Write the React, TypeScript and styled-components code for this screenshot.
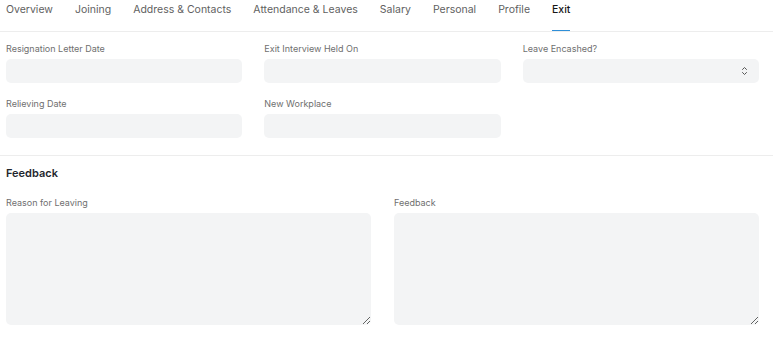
import React from 'react'
import styled, { createGlobalStyle } from 'styled-components'

const GlobalStyle = createGlobalStyle`
    html, body {
        margin: 0;
        padding: 0;
        background: #ffffff;
    }
    body {
        font-family: Inter, "Noto Sans", sans-serif;
        color: #171717;
    }
`

const Page = styled.div`
    width: 773px;
`

const TabBar = styled.nav`
    display: flex;
    gap: 22px;
    height: 31px;
    padding: 0 6px;
    border-bottom: 1px solid #ededed;
`

const Tab = styled.div<{ active?: boolean }>`
    position: relative;
    padding-top: 3px;
    font-size: 10.5px;
    line-height: 14px;
    color: ${p => p.active ? '#171717' : '#5f5f5f'};
    font-weight: ${p => p.active ? 500 : 400};

    &::after {
        content: '';
        display: ${p => p.active ? 'block' : 'none'};
        position: absolute;
        left: 0;
        right: 0;
        bottom: 0;
        height: 1px;
        background: #2f8fd8;
    }
`

const Section = styled.section<{ divider?: boolean }>`
    padding: 10px 14px 17px 6px;
    border-bottom: ${p => p.divider ? '1px solid #ededed' : 'none'};
`

const SectionTitle = styled.h3`
    margin: 0 0 16px;
    font-size: 11px;
    line-height: 14px;
    font-weight: 600;
    color: #1f272e;
`

const Grid = styled.div<{ cols: number }>`
    display: grid;
    grid-template-columns: repeat(${p => p.cols}, 1fr);
    column-gap: ${p => p.cols === 2 ? 23 : 22}px;
    row-gap: 14px;
`

const Column = styled.div`
    display: flex;
    flex-direction: column;
    gap: 14px;
`

const Field = styled.div`
    display: flex;
    flex-direction: column;
    gap: 4px;
`

const Label = styled.label`
    font-size: 9px;
    line-height: 13px;
    color: #6f6f6f;
`

const Input = styled.div`
    height: 24px;
    border-radius: 5px;
    background: #f3f4f5;
`

const SelectBox = styled.div`
    display: flex;
    align-items: center;
    justify-content: flex-end;
    padding-right: 11px;
    height: 24px;
    border-radius: 5px;
    background: #f3f4f5;
`

const TextArea = styled.textarea`
    box-sizing: border-box;
    height: 112px;
    border: none;
    border-radius: 5px;
    background: #f3f4f5;
    resize: vertical;
    outline: none;
    font-family: inherit;
`

const tabs = ['Overview', 'Joining', 'Address & Contacts', 'Attendance & Leaves', 'Salary', 'Personal', 'Profile', 'Exit']

const UpDown = () =>
    <svg width="7" height="10" viewBox="0 0 7 10" fill="none" stroke="#555" strokeWidth="1" strokeLinecap="round" strokeLinejoin="round">
        <path d="M1.5 3.5 L3.5 1.5 L5.5 3.5" />
        <path d="M1.5 6.5 L3.5 8.5 L5.5 6.5" />
    </svg>

const App: React.FC = () =>
    <Page>
        <GlobalStyle />
        <TabBar>
            {tabs.map(t => <Tab key={t} active={t === 'Exit'}>{t}</Tab>)}
        </TabBar>
        <Section divider>
            <Grid cols={3}>
                <Column>
                    <Field>
                        <Label>Resignation Letter Date</Label>
                        <Input />
                    </Field>
                    <Field>
                        <Label>Relieving Date</Label>
                        <Input />
                    </Field>
                </Column>
                <Column>
                    <Field>
                        <Label>Exit Interview Held On</Label>
                        <Input />
                    </Field>
                    <Field>
                        <Label>New Workplace</Label>
                        <Input />
                    </Field>
                </Column>
                <Column>
                    <Field>
                        <Label>Leave Encashed?</Label>
                        <SelectBox><UpDown /></SelectBox>
                    </Field>
                </Column>
            </Grid>
        </Section>
        <Section>
            <SectionTitle>Feedback</SectionTitle>
            <Grid cols={2}>
                <Field>
                    <Label>Reason for Leaving</Label>
                    <TextArea />
                </Field>
                <Field>
                    <Label>Feedback</Label>
                    <TextArea />
                </Field>
            </Grid>
        </Section>
    </Page>

export default App
